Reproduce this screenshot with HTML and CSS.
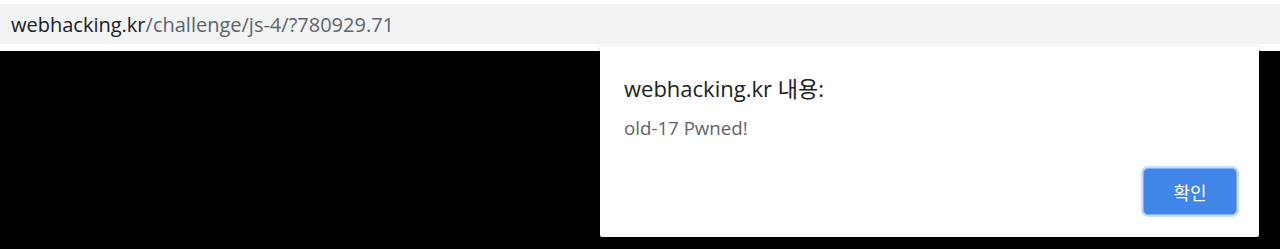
FILE: index.html
```html
<!DOCTYPE html>
<html lang="ko">
<head>
<meta charset="utf-8">
<title>webhacking.kr</title>
<link rel="stylesheet" href="styles.css">
</head>
<body>
<div class="top-gap"></div>
<div class="urlbar"><span class="host">webhacking.kr</span><span class="path">/challenge/js-4/?780929.71</span></div>
<div class="under-gap"></div>
<div class="page"></div>
<div class="dialog">
  <div class="d-title">webhacking.kr 내용:</div>
  <div class="d-msg">old-17 Pwned!</div>
  <div class="d-actions"><button class="ok">확인</button></div>
</div>
</body>
</html>
```
FILE: styles.css
```css
html, body { margin: 0; padding: 0; }
body {
  width: 1280px; height: 249px; overflow: hidden;
  background: #000;
  font-family: "Open Sans", "Noto Sans CJK KR", sans-serif;
  position: relative;
}
.top-gap { height: 4px; background: #fff; }
.urlbar {
  height: 40px; background: #f1f3f4;
  display: flex; align-items: center;
  padding-left: 11px;
  font-size: 20px;
}
.host { color: #202124; }
.path { color: #5f6368; }
.under-gap { height: 7px; background: #fff; }
.page { height: 198px; background: #000; }
.dialog {
  position: absolute; left: 600px; top: 46px;
  width: 659px; height: 191px; box-sizing: border-box;
  background: #fff;
  border-radius: 2px;
  box-shadow: 0 1px 3px rgba(0,0,0,0.35);
  padding: 26px 23px 22px 24px;
  display: flex; flex-direction: column;
}
.d-title { font-size: 22px; color: #202124; line-height: 32px; }
.d-msg { font-size: 18.7px; color: #5f6368; line-height: 26px; margin-top: 11px; }
.d-actions { margin-top: auto; display: flex; justify-content: flex-end; }
.ok {
  width: 94px; height: 47px;
  background: #3f86e8; color: #fff;
  border: 1px solid #80b0f0; border-radius: 5px;
  box-shadow: 0 0 0 2px #c6dcf8;
  font-family: "Noto Sans CJK KR", sans-serif; font-size: 18px;
  margin-right: -1px;
}
```
